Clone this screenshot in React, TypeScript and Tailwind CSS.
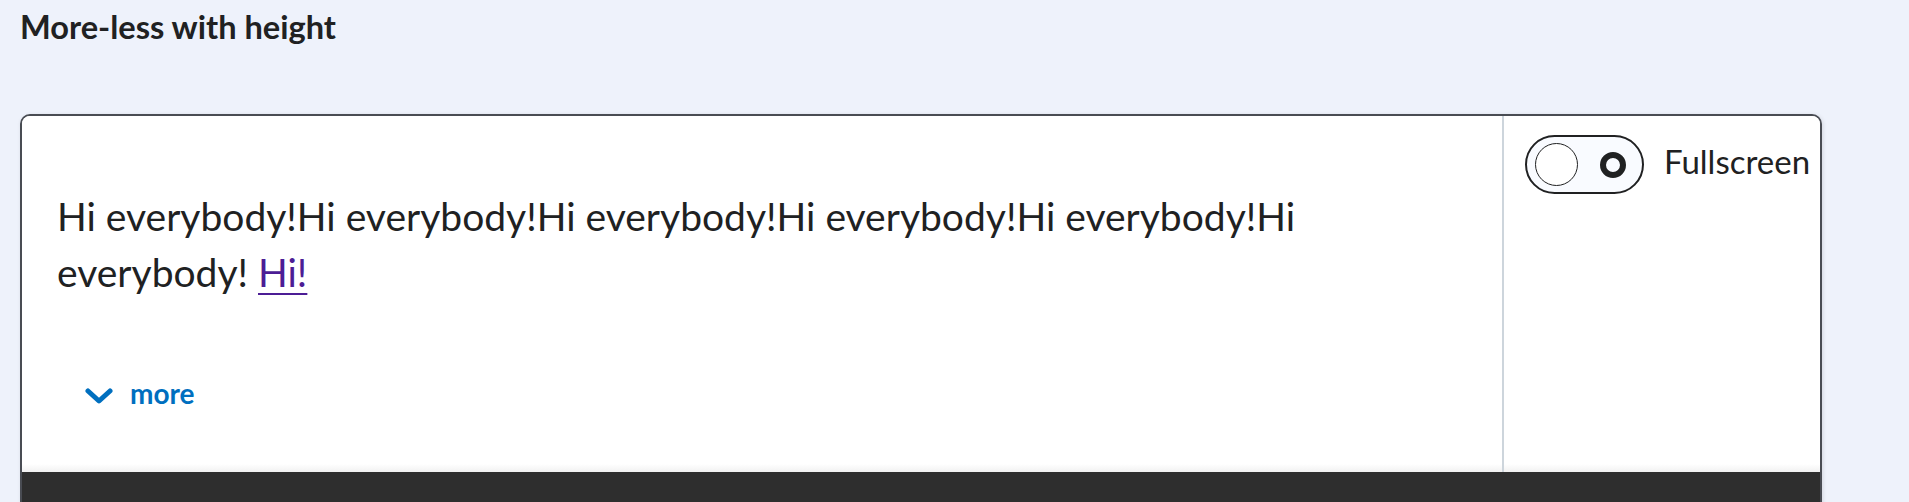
import React from 'react';

const font = "font-['Lato','Noto_Sans',sans-serif]";

function Chevron() {
  return (
    <svg width="28" height="16" viewBox="0 0 28 16" fill="none" className="mt-[12px] shrink-0">
      <path d="M3 3 L14 13 L25 3" stroke="#006fbf" strokeWidth="5" strokeLinecap="round" strokeLinejoin="round" />
    </svg>
  );
}

function Toggle() {
  return (
    <div className="flex h-[59px] w-[119px] shrink-0 items-center rounded-full border-2 border-[#202122] bg-[#f9fbff] pl-[8px]">
      <div className="h-[43px] w-[43px] rounded-full border-[1.5px] border-[#202122] bg-white" />
      <div className="ml-[22px] h-[26px] w-[26px] rounded-full border-[6px] border-[#202122]" />
    </div>
  );
}

export default function App() {
  return (
    <div className={`h-screen overflow-hidden bg-[#eef2fb] px-[20px] text-[#202122] ${font}`}>
      <h2 className="pt-[8px] text-[32.6px] font-bold leading-[38px]">More-less with height</h2>

      <div className="mt-[68px] w-[1802px] overflow-hidden rounded-[10px] border-2 border-[#494c53] bg-white shadow-[1px_1px_4px_rgba(0,0,0,0.12)]">
        <div className="flex h-[356px] bg-[linear-gradient(to_bottom,white_calc(100%-8px),#f1f1f1)]">
          {/* content */}
          <div className="w-[1482px] border-r-2 border-[#cdd5dc] pl-[35px] pr-[36px] pt-[72px]">
            <p className="text-[39px] leading-[56px]">
              Hi everybody!Hi everybody!Hi everybody!Hi everybody!Hi everybody!Hi everybody!{' '}
              <a href="#" className="text-[#4c1d95] underline decoration-[2px] underline-offset-[6px]">
                Hi!
              </a>
            </p>
            <button className="ml-[28px] mt-[76px] flex items-start gap-[17px]">
              <Chevron />
              <span className="text-[28px] font-bold leading-[34px] text-[#006fbf]">more</span>
            </button>
          </div>

          {/* options */}
          <div className="flex flex-1 items-start gap-[20px] pl-[21px] pt-[19px]">
            <Toggle />
            <span className="mt-[7px] whitespace-nowrap text-[33px] leading-[38px]">Fullscreen</span>
          </div>
        </div>
        <div className="h-[40px] bg-[#2e2e2e]" />
      </div>
    </div>
  );
}
